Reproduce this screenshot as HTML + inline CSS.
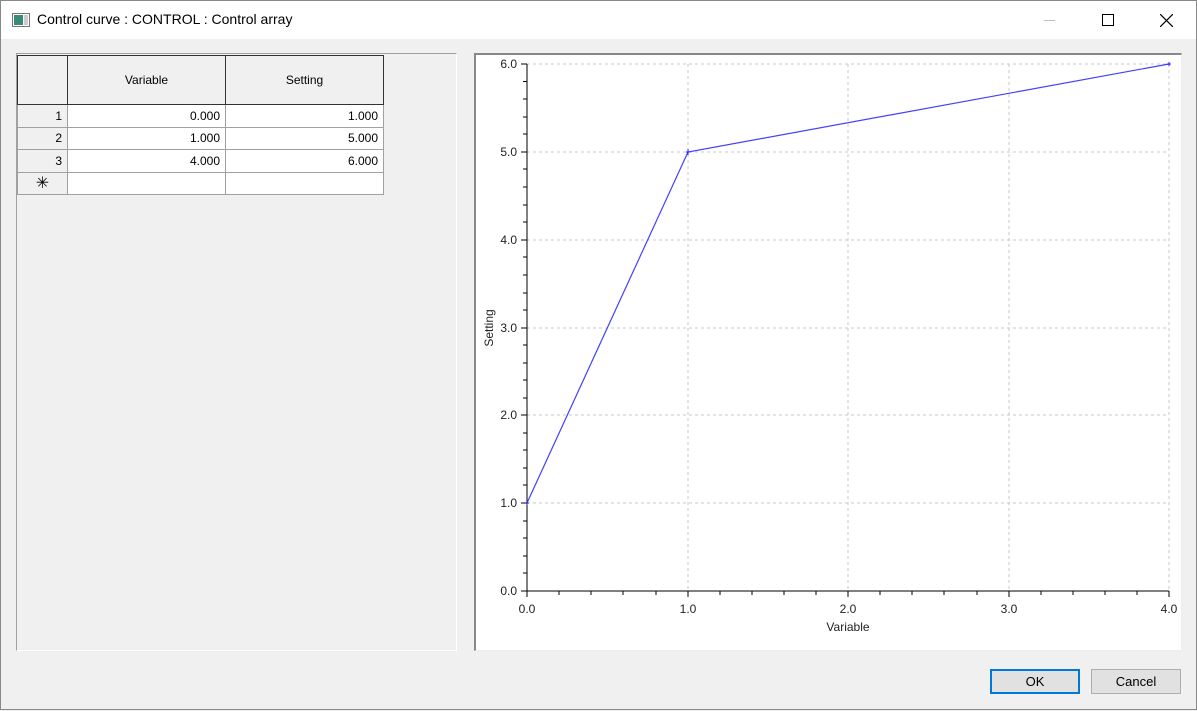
<!DOCTYPE html><html><head><style>
*{margin:0;padding:0;box-sizing:border-box}
body{width:1197px;height:710px;background:#f0f0f0;font-family:"Liberation Sans",sans-serif;position:relative;overflow:hidden;border:1px solid #888}
.title{position:absolute;left:0;top:0;width:1195px;height:38px;background:#fff}
.title span{position:absolute;left:36px;top:10px;font-size:14px;color:#000}
.panel{position:absolute;border:1px solid;border-color:#a0a0a0 #fff #fff #a0a0a0;}
table{position:absolute;left:16px;top:54px;border-collapse:collapse;font-size:12px}
td{border:1px solid #a0a0a0;height:22.5px;text-align:right;padding-right:5px;background:#fff}
td.h{background:#f0f0f0;width:49px}
tr.hd td{height:49px;text-align:center;border:1px solid #333;background:#f0f0f0;padding:0}
.btn{position:absolute;top:668px;width:90px;height:25px;background:#e1e1e1;border:1px solid #adadad;font-size:13px;text-align:center;line-height:23px}
</style></head><body>
<div class="title"><svg style="position:absolute;left:11px;top:12px" width="18" height="14"><rect x="0.5" y="0.5" width="17" height="13" fill="#fff" stroke="#777"/><rect x="2" y="2" width="9" height="10" fill="#3a8a7a"/><rect x="12" y="2" width="4" height="10" fill="#ccc"/></svg><span>Control curve : CONTROL : Control array</span>
<div style="position:absolute;left:1043px;top:19px;width:11px;border-top:1px solid #bbb"></div>
<div style="position:absolute;left:1101px;top:13px;width:12px;height:12px;border:1px solid #000"></div>
<svg style="position:absolute;left:1159px;top:13px" width="13" height="13"><path d="M0 0L13 13M13 0L0 13" stroke="#000" stroke-width="1.2"/></svg></div>
<div class="panel" style="left:15px;top:52px;width:441px;height:598px"></div>
<table>
<tr class="hd"><td style="width:50px"></td><td style="width:158px">Variable</td><td style="width:158px">Setting</td></tr>
<tr><td class="h">1</td><td>0.000</td><td>1.000</td></tr>
<tr><td class="h">2</td><td>1.000</td><td>5.000</td></tr>
<tr><td class="h">3</td><td>4.000</td><td>6.000</td></tr>
<tr><td class="h" style="text-align:center;padding:0;font-size:16px">✳</td><td></td><td></td></tr>
</table>
<div class="panel" style="left:473px;top:52px;width:708px;height:598px;background:#fff;border-color:#888 #eee #eee #888;border-width:2px 1px 1px 2px"></div>
<svg style="position:absolute;left:0;top:0" width="1197" height="710" font-family="Liberation Sans" font-size="12">
<g stroke="#c8c8c8" stroke-dasharray="3,3" fill="none">
<path d="M526 63H1168M526 151H1168M526 239H1168M526 327H1168M526 414H1168M526 502H1168M687 63V590M847 63V590M1008 63V590M1168 63V590"/></g>
<path d="M526 63V590H1168" stroke="#000" fill="none"/>
<path d="M526 502L687 151L1168 63" stroke="#4040ff" fill="none" stroke-width="1.2"/>
<path d="M524 502h4M526 500v4M685 151h4M687 148v6M1166 63h4M1168 61v4" stroke="#2020ff"/>
<g fill="#222" text-anchor="end">
<text x="516" y="67">6.0</text><text x="516" y="155">5.0</text><text x="516" y="243">4.0</text><text x="516" y="331">3.0</text><text x="516" y="418">2.0</text><text x="516" y="506">1.0</text><text x="516" y="594">0.0</text></g>
<g fill="#222" text-anchor="middle">
<text x="526" y="612">0.0</text><text x="687" y="612">1.0</text><text x="847" y="612">2.0</text><text x="1008" y="612">3.0</text><text x="1168" y="612">4.0</text>
<text x="847" y="630">Variable</text>
<text transform="translate(492,327) rotate(-90)">Setting</text></g>
<path stroke="#000" fill="none" d="M520 63h6M520 151h6M520 239h6M520 327h6M520 414h6M520 502h6M520 590h6M522 80.5h4M522 98h4M522 116h4M522 133h4M522 168h4M522 186h4M522 204h4M522 221h4M522 256h4M522 274h4M522 292h4M522 309h4M522 344h4M522 362h4M522 379h4M522 397h4M522 432h4M522 449h4M522 467h4M522 484h4M522 520h4M522 537h4M522 555h4M522 572h4M526 590v6M687 590v6M847 590v6M1008 590v6M1168 590v6M558 590v4M590 590v4M622 590v4M655 590v4M719 590v4M751 590v4M783 590v4M815 590v4M879 590v4M911 590v4M943 590v4M976 590v4M1040 590v4M1072 590v4M1104 590v4M1136 590v4"/>
</svg>
<div class="btn" style="left:989px;border:2px solid #0078d7;line-height:21px">OK</div>
<div class="btn" style="left:1090px">Cancel</div>
</body></html>
